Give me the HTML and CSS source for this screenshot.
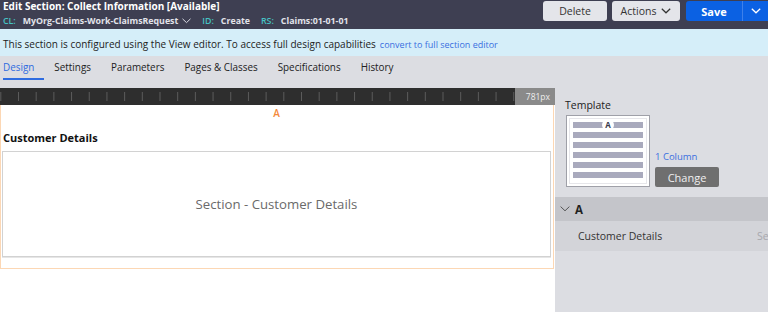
FILE: index.html
```html
<!DOCTYPE html>
<html lang="en">
<head>
<meta charset="utf-8">
<title>Edit Section: Collect Information</title>
<link rel="stylesheet" href="styles.css">
</head>
<body>
<div class="app">
  <header class="topbar">
    <div class="titles">
      <div class="title"><span class="edit">Edit</span> Section: Collect Information [Available]</div>
      <div class="meta">
        <span class="k">CL:</span>
        <span class="v">MyOrg-Claims-Work-ClaimsRequest</span>
        <svg class="meta-chev" width="9" height="6" viewBox="0 0 9 6"><polyline points="0.5,0.8 4.5,4.6 8.5,0.8" fill="none" stroke="#d8d9e2" stroke-width="1"/></svg>
        <span class="k k-gap">ID:</span>
        <span class="v">Create</span>
        <span class="k k-gap">RS:</span>
        <span class="v">Claims:01-01-01</span>
      </div>
    </div>
    <div class="actions">
      <button class="btn btn-delete">Delete</button>
      <button class="btn btn-actions">Actions <svg width="10" height="6" viewBox="0 0 10 6"><polyline points="0.8,0.8 5,4.8 9.2,0.8" fill="none" stroke="#333" stroke-width="1.2"/></svg></button>
      <div class="save-group">
        <button class="save">Save</button>
        <button class="save-menu"><svg width="10" height="6" viewBox="0 0 10 6"><polyline points="0.8,0.8 5,4.8 9.2,0.8" fill="none" stroke="#fff" stroke-width="1.3"/></svg></button>
      </div>
    </div>
  </header>

  <div class="infobar">This section is configured using the View editor. To access full design capabilities <a class="info-link">convert to full section editor</a></div>

  <nav class="tabs">
    <span class="tab active">Design</span>
    <span class="tab">Settings</span>
    <span class="tab">Parameters</span>
    <span class="tab">Pages &amp; Classes</span>
    <span class="tab">Specifications</span>
    <span class="tab">History</span>
  </nav>

  <div class="main">
    <div class="designer">
      <div class="ruler">
        <div class="ticks"></div>
        <div class="width-label">781px</div>
      </div>
      <div class="canvas">
        <div class="region">
          <div class="region-label">A</div>
          <div class="field-title">Customer Details</div>
          <div class="embedded">Section - Customer Details</div>
        </div>
      </div>
    </div>

    <aside class="props">
      <div class="tpl-label">Template</div>
      <div class="tpl-row">
        <div class="thumb">
          <div class="bar bar-first"><span class="badge">A</span></div>
          <div class="bar"></div>
          <div class="bar"></div>
          <div class="bar"></div>
          <div class="bar"></div>
          <div class="bar"></div>
        </div>
        <div class="tpl-info">
          <a class="tpl-link">1 Column</a>
          <button class="change">Change</button>
        </div>
      </div>
      <div class="acc-head">
        <svg width="10" height="6" viewBox="0 0 10 6"><polyline points="0.6,0.6 5,4.8 9.4,0.6" fill="none" stroke="#555" stroke-width="1"/></svg>
        <span>A</span>
      </div>
      <div class="acc-row">
        <span class="acc-name">Customer Details</span>
        <span class="acc-type">Section</span>
      </div>
    </aside>
  </div>
</div>
</body>
</html>
```

FILE: styles.css
```css
* { box-sizing: border-box; }

html, body {
  margin: 0;
  padding: 0;
}

body {
  width: 768px;
  height: 312px;
  overflow: hidden;
  font-family: "Open Sans", "Noto Sans", sans-serif;
  color: #222;
  background: #fff;
}

.app {
  display: flex;
  flex-direction: column;
  height: 312px;
}

/* Top bar */
.topbar {
  height: 29px;
  flex: none;
  background: #3e3f52;
  display: flex;
  justify-content: space-between;
  align-items: flex-start;
}

.titles {
  padding-left: 3px;
}

.title {
  font-size: 10px;
  font-weight: 700;
  line-height: 13px;
  color: #fff;
}

.meta {
  display: flex;
  align-items: center;
  margin-top: 2px;
  font-size: 8.8px;
  font-weight: 700;
  line-height: 12px;
  color: #e2e3ea;
}

.meta .k {
  color: #46c2c4;
  font-weight: 600;
  margin-right: 7px;
}

.meta .k-gap {
  margin-left: 11px;
}

.meta-chev {
  margin-left: 4px;
}

.actions {
  display: flex;
  align-items: center;
  padding-top: 1px;
}

.btn {
  height: 20px;
  border: none;
  border-radius: 3px;
  background: #e4e5ea;
  color: #333;
  font-family: "Open Sans", sans-serif;
  font-size: 10.5px;
  padding: 0;
  display: flex;
  align-items: center;
  justify-content: center;
  gap: 5px;
}

.btn-delete { width: 64px; margin-right: 5px; }
.btn-actions { width: 68px; margin-right: 6px; }

.save-group {
  display: flex;
  height: 20px;
}

.save {
  width: 56px;
  height: 20px;
  border: none;
  border-radius: 3px 0 0 3px;
  background: #0b61e3;
  color: #fff;
  font-family: "Open Sans", sans-serif;
  font-size: 11px;
  font-weight: 700;
  padding: 0;
}

.save-menu {
  width: 26px;
  height: 20px;
  border: none;
  border-left: 1px solid #3d80ea;
  background: #0b61e3;
  padding: 0;
  display: flex;
  align-items: center;
  justify-content: center;
}

/* Info bar */
.infobar {
  height: 27px;
  flex: none;
  background: #d5eef9;
  font-size: 10px;
  color: #222;
  padding: 3px 0 0 3px;
  display: flex;
  align-items: center;
  white-space: nowrap;
}

.info-link {
  color: #3a6fe0;
  font-size: 9px;
  margin-left: 4px;
}

/* Tabs */
.tabs {
  height: 28px;
  flex: none;
  background: #dcdde2;
  display: flex;
  gap: 10px;
  padding-left: 3px;
}

.tab {
  font-size: 9.9px;
  line-height: 14px;
  padding: 4px 10px 4px 0;
  height: 24px;
  color: #222;
  border-bottom: 2px solid transparent;
}

.tab.active {
  color: #2f6ce0;
  border-bottom-color: #2f6ce0;
}

/* Main */
.main {
  flex: 1;
  display: flex;
  min-height: 0;
}

.designer {
  width: 555px;
  flex: none;
  display: flex;
  flex-direction: column;
  background: #dcdde2;
  padding-top: 4px;
}

.ruler {
  height: 17px;
  flex: none;
  display: flex;
}

.ticks {
  flex: 1;
  background-color: #2e2e2e;
  background-image: linear-gradient(to right, #5b5b5b 0, #5b5b5b 1px, transparent 1px);
  background-size: 17.7px 9px;
  background-position: 18px 4px;
  background-repeat: repeat-x;
}

.width-label {
  width: 40px;
  background: #8a8a8a;
  color: #eee;
  font-size: 8.5px;
  line-height: 17px;
  text-align: right;
  padding-right: 5px;
}

.canvas {
  flex: 1;
  background: #fff;
  padding-right: 1px;
}

.region {
  border: 1px solid #fcd7b4;
  border-top: none;
  padding: 2px 2px 11px 1px;
}

.region-label {
  text-align: center;
  color: #f4893b;
  font-size: 10px;
  font-weight: 600;
  line-height: 12px;
}

.field-title {
  margin-top: 11px;
  font-size: 11px;
  font-weight: 700;
  line-height: 16px;
  color: #111;
  padding-left: 1px;
}

.embedded {
  margin-top: 5px;
  height: 106px;
  border: 1px solid #d2d2d2;
  box-shadow: 0 1px 0 #e6e6e6;
  display: flex;
  align-items: center;
  justify-content: center;
  font-size: 13.2px;
  color: #6a6a6a;
}

/* Properties panel */
.props {
  flex: 1;
  background: #dcdde2;
  overflow: hidden;
  white-space: nowrap;
  padding-top: 14px;
}

.tpl-label {
  font-size: 10.5px;
  line-height: 14px;
  color: #222;
  padding-left: 10px;
}

.tpl-row {
  display: flex;
  align-items: flex-end;
  gap: 5px;
  margin-top: 3px;
  padding-left: 11px;
}

.thumb {
  width: 84px;
  height: 72px;
  border: 1px solid #9fa0a8;
  background: #fff;
  box-shadow: inset 0 0 0 2px #fff, inset 0 0 0 3px #e6e6ea;
  padding: 6px 6px 0 6px;
  display: flex;
  flex-direction: column;
  gap: 4px;
}

.bar {
  height: 6px;
  background: #a9aabd;
  flex: none;
}

.bar-first {
  display: flex;
  align-items: center;
  justify-content: center;
}

.badge {
  width: 12px;
  height: 12px;
  border-radius: 50%;
  background: #fff;
  color: #3a3a4a;
  font-size: 8px;
  font-weight: 700;
  line-height: 12px;
  text-align: center;
  flex: none;
}

.tpl-info {
  display: flex;
  flex-direction: column;
  align-items: flex-start;
}

.tpl-link {
  color: #3a6fe0;
  font-size: 9.5px;
  line-height: 12px;
  margin-bottom: 4px;
}

.change {
  width: 64px;
  height: 20px;
  border: none;
  border-radius: 2px;
  background: #6f6f6f;
  color: #f0f0f0;
  font-family: "Open Sans", sans-serif;
  font-size: 11px;
  padding: 0;
}

.acc-head {
  margin-top: 10px;
  height: 24px;
  background: #c4c5ca;
  display: flex;
  align-items: center;
  gap: 5px;
  padding-left: 5px;
  font-size: 11.5px;
  font-weight: 700;
  color: #222;
}

.acc-row {
  height: 30px;
  background: #d3d4d9;
  display: flex;
  align-items: center;
  padding-left: 23px;
  font-size: 10.5px;
  color: #333;
}

.acc-name {
  width: 179px;
  flex: none;
}

.acc-type {
  color: #a8a8ae;
}
```
